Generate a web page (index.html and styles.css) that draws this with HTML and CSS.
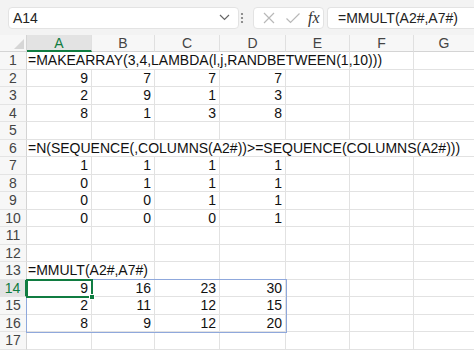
FILE: index.html
```html
<!DOCTYPE html>
<html>
<head>
<meta charset="utf-8">
<link rel="stylesheet" href="styles.css">
</head>
<body>
<div class="toolbar">
  <div class="namebox">
    <span class="nb-text">A14</span>
    <svg class="chev" width="11" height="7" viewBox="0 0 11 7"><path d="M1 1 L5.5 5.5 L10 1" fill="none" stroke="#666" stroke-width="1.2"/></svg>
  </div>
  <svg class="vdots" width="4" height="14" viewBox="0 0 4 14"><circle cx="2" cy="3" r="1.1" fill="#777"/><circle cx="2" cy="7" r="1.1" fill="#777"/><circle cx="2" cy="11" r="1.1" fill="#777"/></svg>
  <div class="fbtns">
    <svg width="14" height="14" viewBox="0 0 14 14"><path d="M2 2 L12 12 M12 2 L2 12" stroke="#b8b8b8" stroke-width="1.2" fill="none"/></svg>
    <svg width="16" height="14" viewBox="0 0 16 14"><path d="M1.5 7.5 L5.5 11.5 L14.5 2.5" stroke="#b8b8b8" stroke-width="1.2" fill="none"/></svg>
    <span class="fx">fx</span>
  </div>
  <div class="formula">=MMULT(A2#,A7#)</div>
</div>
<div class="sheet">
  <div class="corner"><svg width="10" height="10" viewBox="0 0 10 10"><path d="M10 0 L10 10 L0 10 Z" fill="#d6d6d6"/></svg></div>
  <div class="ch sel">A</div><div class="ch">B</div><div class="ch">C</div><div class="ch">D</div><div class="ch">E</div><div class="ch">F</div><div class="ch last">G</div>

  <div class="rh">1</div><div class="c txt span5">=MAKEARRAY(3,4,LAMBDA(l,j,RANDBETWEEN(1,10)))</div><div class="c"></div><div class="c last"></div>
  <div class="rh">2</div><div class="c">9</div><div class="c">7</div><div class="c">7</div><div class="c">7</div><div class="c"></div><div class="c"></div><div class="c last"></div>
  <div class="rh">3</div><div class="c">2</div><div class="c">9</div><div class="c">1</div><div class="c">3</div><div class="c"></div><div class="c"></div><div class="c last"></div>
  <div class="rh">4</div><div class="c">8</div><div class="c">1</div><div class="c">3</div><div class="c">8</div><div class="c"></div><div class="c"></div><div class="c last"></div>
  <div class="rh">5</div><div class="c"></div><div class="c"></div><div class="c"></div><div class="c"></div><div class="c"></div><div class="c"></div><div class="c last"></div>
  <div class="rh">6</div><div class="c txt span7 last">=N(SEQUENCE(,COLUMNS(A2#))&gt;=SEQUENCE(COLUMNS(A2#)))</div>
  <div class="rh">7</div><div class="c">1</div><div class="c">1</div><div class="c">1</div><div class="c">1</div><div class="c"></div><div class="c"></div><div class="c last"></div>
  <div class="rh">8</div><div class="c">0</div><div class="c">1</div><div class="c">1</div><div class="c">1</div><div class="c"></div><div class="c"></div><div class="c last"></div>
  <div class="rh">9</div><div class="c">0</div><div class="c">0</div><div class="c">1</div><div class="c">1</div><div class="c"></div><div class="c"></div><div class="c last"></div>
  <div class="rh">10</div><div class="c">0</div><div class="c">0</div><div class="c">0</div><div class="c">1</div><div class="c"></div><div class="c"></div><div class="c last"></div>
  <div class="rh">11</div><div class="c"></div><div class="c"></div><div class="c"></div><div class="c"></div><div class="c"></div><div class="c"></div><div class="c last"></div>
  <div class="rh">12</div><div class="c"></div><div class="c"></div><div class="c"></div><div class="c"></div><div class="c"></div><div class="c"></div><div class="c last"></div>
  <div class="rh">13</div><div class="c txt span2">=MMULT(A2#,A7#)</div><div class="c"></div><div class="c"></div><div class="c"></div><div class="c"></div><div class="c last"></div>
  <div class="rh selr">14</div><div class="c">9</div><div class="c">16</div><div class="c">23</div><div class="c">30</div><div class="c"></div><div class="c"></div><div class="c last"></div>
  <div class="rh">15</div><div class="c">2</div><div class="c">11</div><div class="c">12</div><div class="c">15</div><div class="c"></div><div class="c"></div><div class="c last"></div>
  <div class="rh">16</div><div class="c">8</div><div class="c">9</div><div class="c">12</div><div class="c">20</div><div class="c"></div><div class="c"></div><div class="c last"></div>
  <div class="rh">17</div><div class="c"></div><div class="c"></div><div class="c"></div><div class="c"></div><div class="c"></div><div class="c"></div><div class="c last"></div>

  <div class="spill"></div>
  <div class="active"><span class="handle"></span></div>
</div>
</body>
</html>
```
FILE: styles.css
```css
* { box-sizing: border-box; }
html, body { margin: 0; padding: 0; }
body {
  width: 474px;
  height: 350px;
  overflow: hidden;
  background: #ffffff;
  font-family: "Liberation Sans", Arial, sans-serif;
  font-size: 14px;
  color: #111;
}
.toolbar {
  height: 35px;
  background: #f3f3f3;
  display: flex;
  align-items: center;
  padding-left: 8px;
}
.namebox {
  width: 231px;
  height: 22px;
  background: #fff;
  border: 1px solid #e3e3e3;
  border-radius: 4px;
  display: flex;
  align-items: center;
  justify-content: space-between;
  padding: 0 8px 0 4px;
  font-size: 14px;
  color: #222;
}
.vdots { margin-left: 1px; }
.fbtns {
  margin-left: 9px;
  width: 71px;
  height: 22px;
  background: #fff;
  border: 1px solid #e3e3e3;
  border-radius: 4px;
  display: flex;
  align-items: center;
  padding-left: 8px;
  gap: 9px;
}
.fx {
  font-family: "Liberation Serif", "Times New Roman", serif;
  font-style: italic;
  font-size: 16px;
  color: #333;
  margin-left: -2px;
}
.formula {
  margin-left: 3px;
  flex: 1;
  height: 22px;
  background: #fff;
  border: 1px solid #e3e3e3;
  border-right: none;
  border-radius: 4px 0 0 4px;
  display: flex;
  align-items: center;
  padding-left: 10px;
  font-size: 14px;
  color: #222;
}
.sheet {
  position: relative;
  display: grid;
  grid-template-columns: 27px 65px 63px 65px 66px 64px 64px 1fr;
  grid-template-rows: 17px repeat(17, 17.5px);
}
.corner {
  background: #f7f7f7;
  border-right: 1px solid #d4d4d4;
  border-bottom: 1px solid #d4d4d4;
  display: flex;
  align-items: flex-end;
  justify-content: flex-end;
  padding: 0 2px 2px 0;
}
.corner svg { display: block; }
.ch {
  background: #f7f7f7;
  border-right: 1px solid #e0e0e0;
  border-bottom: 1px solid #d4d4d4;
  text-align: center;
  line-height: 16px;
  color: #444;
  font-size: 14px;
}
.ch.last { border-right: none; }
.ch.sel {
  background: #e3e3e3;
  color: #107c41;
  border-bottom: 2px solid #107c41;
}
.rh {
  background: #f7f7f7;
  border-right: 1px solid #d4d4d4;
  border-bottom: 1px solid #e4e4e4;
  text-align: center;
  line-height: 17px;
  color: #444;
  font-size: 14px;
}
.rh.selr {
  background: #e3e3e3;
  color: #107c41;
  border-right: 2px solid #107c41;
}
.c {
  border-right: 1px solid #e2e2e2;
  border-bottom: 1px solid #e2e2e2;
  text-align: right;
  padding-right: 3px;
  line-height: 17px;
  white-space: nowrap;
  color: #111;
}
.c.last { border-right: none; }
.c.txt { text-align: left; padding-left: 1px; padding-right: 0; }
.span2 { grid-column: span 2; }
.span5 { grid-column: span 5; }
.span7 { grid-column: span 7; }
.spill {
  position: absolute;
  left: 26px;
  top: 244px;
  width: 261px;
  height: 53.5px;
  border: 1.5px solid #8fa8dc;
  pointer-events: none;
}
.active {
  position: absolute;
  left: 26px;
  top: 244px;
  width: 67px;
  height: 19px;
  border: 2px solid #107c41;
}
.handle {
  position: absolute;
  right: -4px;
  bottom: -4px;
  width: 6px;
  height: 6px;
  background: #107c41;
  border: 1px solid #fff;
}
```
